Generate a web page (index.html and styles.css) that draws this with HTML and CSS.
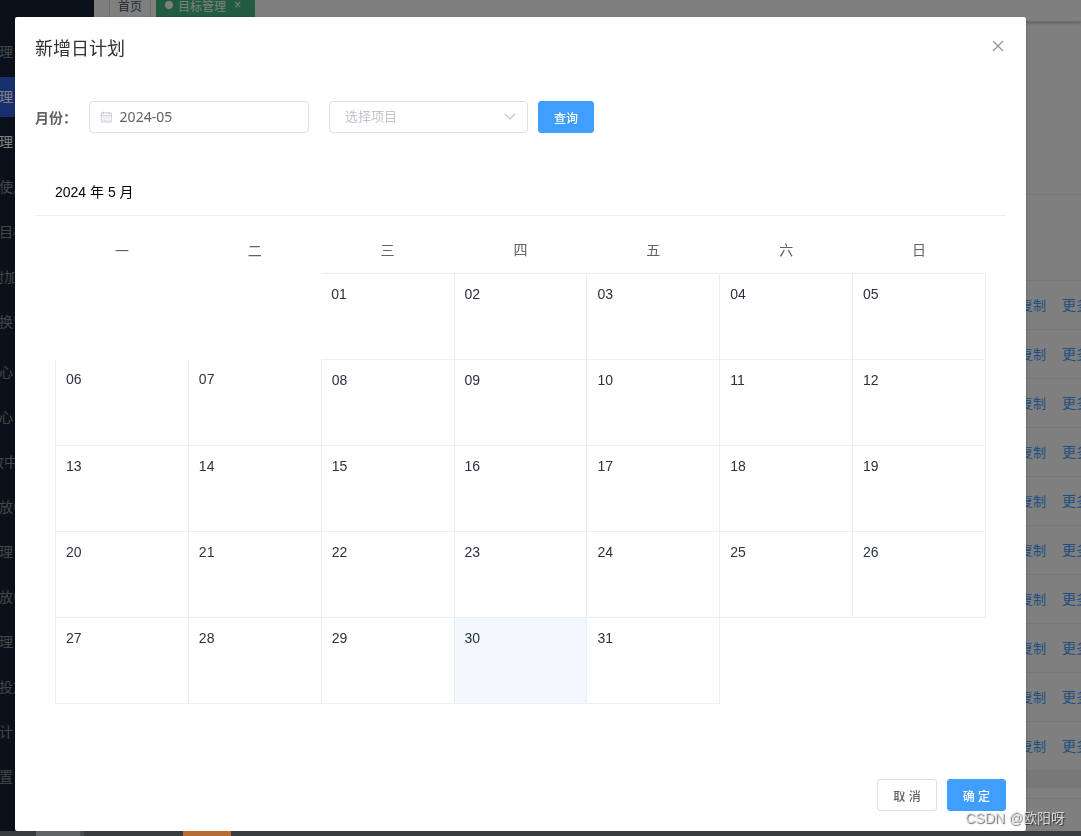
FILE: index.html
```
<!DOCTYPE html>
<html lang="zh-CN">
<head>
    <meta charset="UTF-8">
    <title>新增日计划</title>
    <link rel="stylesheet" href="styles.css">
</head>
<body>

<div class="app">
    <nav class="sidebar">
        <a href="#">理</a>
        <a href="#" class="active">理</a>
        <a href="#" class="open">理</a>
        <a href="#">使用</a>
        <a href="#">目标</a>
        <a href="#" class="deep">附加</a>
        <a href="#">换管</a>
        <a href="#" class="group">心</a>
        <a href="#">心</a>
        <a href="#" class="deep">放中</a>
        <a href="#">放中</a>
        <a href="#">理</a>
        <a href="#">放中</a>
        <a href="#">理</a>
        <a href="#">投放</a>
        <a href="#">计</a>
        <a href="#">置</a>
    </nav>

    <main class="main">
        <div class="tabs">
            <a href="#" class="tab">首页</a>
            <a href="#" class="tab current"><span class="dot"></span>目标管理<span class="tab-close">×</span></a>
        </div>
        <div class="panel search-panel"></div>
        <div class="panel head-panel"></div>
        <div class="rows">
            <div class="row"><a href="#">复制</a><a href="#" class="more">更多</a></div>
            <div class="row"><a href="#">复制</a><a href="#" class="more">更多</a></div>
            <div class="row"><a href="#">复制</a><a href="#" class="more">更多</a></div>
            <div class="row"><a href="#">复制</a><a href="#" class="more">更多</a></div>
            <div class="row"><a href="#">复制</a><a href="#" class="more">更多</a></div>
            <div class="row"><a href="#">复制</a><a href="#" class="more">更多</a></div>
            <div class="row"><a href="#">复制</a><a href="#" class="more">更多</a></div>
            <div class="row"><a href="#">复制</a><a href="#" class="more">更多</a></div>
            <div class="row"><a href="#">复制</a><a href="#" class="more">更多</a></div>
            <div class="row"><a href="#">复制</a><a href="#" class="more">更多</a></div>
        </div>
        <div class="pager"></div>
    </main>
</div>

<div class="overlay">
    <div class="dialog" role="dialog" aria-labelledby="dialogTitle">
        <div class="dialog-header">
            <h2 id="dialogTitle">新增日计划</h2>
            <button class="close" aria-label="关闭">
                <svg width="12" height="12" viewBox="0 0 12 12"><path d="M1 1l10 10M11 1L1 11" fill="none" stroke="#909399" stroke-width="1.2"/></svg>
            </button>
        </div>

        <form class="filter">
            <label for="month">月份：</label>
            <div class="field month">
                <svg width="14" height="14" viewBox="0 0 14 14" fill="none" stroke="#c0c4cc">
                    <path d="M1.5 2.5h11v10h-11zM1.5 5.5h11M4 1v3M10 1v3"/>
                    <path d="M3.5 8h7M3.5 10.5h7" stroke-dasharray="2 .7"/>
                </svg>
                <input type="text" id="month" value="2024-05">
            </div>
            <div class="field project">
                <select aria-label="选择项目">
                    <option>选择项目</option>
                </select>
                <svg width="12" height="8" viewBox="0 0 12 8"><path d="M1 1l5 5 5-5" fill="none" stroke="#c0c4cc" stroke-width="1.2"/></svg>
            </div>
            <button type="button" class="btn primary">查询</button>
        </form>

        <div class="calendar">
            <div class="calendar-title">2024 年 5 月</div>
            <div class="calendar-body">
                <table>
                    <thead>
                        <tr><th>一</th><th>二</th><th>三</th><th>四</th><th>五</th><th>六</th><th>日</th></tr>
                    </thead>
                    <tbody>
                        <tr><td class="empty"></td><td class="empty"></td><td>01</td><td>02</td><td>03</td><td>04</td><td>05</td></tr>
                        <tr><td>06</td><td>07</td><td>08</td><td>09</td><td>10</td><td>11</td><td>12</td></tr>
                        <tr><td>13</td><td>14</td><td>15</td><td>16</td><td>17</td><td>18</td><td>19</td></tr>
                        <tr><td>20</td><td>21</td><td>22</td><td>23</td><td>24</td><td>25</td><td>26</td></tr>
                        <tr><td>27</td><td>28</td><td>29</td><td class="selected">30</td><td>31</td><td class="empty"></td><td class="empty"></td></tr>
                    </tbody>
                </table>
            </div>
        </div>

        <div class="dialog-footer">
            <button class="btn">取 消</button>
            <button class="btn primary">确 定</button>
        </div>
    </div>
    <div class="taskbar">
        <span class="task"></span>
        <span class="task-edge"></span>
        <span class="task-alert"></span>
    </div>
</div>

<div class="watermark">CSDN @欧阳呀</div>

</body>
</html>
```
FILE: styles.css
```
* {
    box-sizing: border-box;
}
body {
    margin: 0;
    height: 100vh;
    overflow: hidden;
    font-family: "Liberation Sans", "Noto Sans CJK SC", sans-serif;
    font-size: 14px;
    color: #606266;
}
a {
    text-decoration: none;
}
button, input, select {
    font-family: inherit;
}

/* page behind the dialog */
.app {
    display: flex;
    height: 100vh;
}
.sidebar {
    flex: 0 0 94px;
    padding-top: 32px;
    background: #142235;
    overflow: hidden;
}
.sidebar a {
    display: block;
    height: 40px;
    margin-bottom: 5px;
    line-height: 41px;
    text-indent: -1px;
    color: #8a8d92;
}
.sidebar a.active {
    background: #3260e0;
    color: #fff;
}
.sidebar a.open {
    color: #fff;
}
.sidebar a.deep {
    text-indent: -10px;
}
.sidebar a.group {
    margin-top: 10px;
}
.main {
    flex: 1;
    min-width: 0;
    background: #fff;
    overflow: hidden;
}
.tabs {
    display: flex;
    gap: 5px;
    height: 22px;
    padding-left: 15px;
    border-bottom: 1px solid #d8dce5;
    box-shadow: 0 1px 3px #bbb;
}
.tab {
    display: flex;
    align-items: center;
    height: 18px;
    padding: 0 8px 8px;
    border: 1px solid #d8dce5;
    border-width: 0 1px;
    font-size: 12px;
    color: #495060;
}
.tab.current {
    background: #42b983;
    border-color: #42b983;
    color: #fff;
}
.dot {
    width: 8px;
    height: 8px;
    margin-right: 5px;
    border-radius: 50%;
    background: #fff;
}
.tab-close {
    margin: 0 5px 0 8px;
}
.panel {
    border-bottom: 1px solid #ebeef5;
}
.search-panel {
    height: 173px;
}
.head-panel {
    height: 86px;
}
.row {
    display: flex;
    justify-content: flex-end;
    align-items: center;
    gap: 16px;
    height: 49px;
    margin-right: -9px;
    padding-bottom: 2px;
    border-bottom: 1px solid #ebeef5;
}
.row a {
    font-size: 13px;
    color: #409eff;
}
.row a.more {
    font-size: 14px;
}
.pager {
    height: 28px;
    border-top: 17px solid #f0f0f0;
    border-bottom: 1px solid #ebeef5;
}

/* dialog */
.overlay {
    position: fixed;
    inset: 0;
    display: flex;
    flex-direction: column;
    background: rgba(0, 0, 0, 0.5);
}
.dialog {
    flex: 1;
    display: flex;
    flex-direction: column;
    margin: 17px 55px 0 15px;
    padding: 20px;
    border-radius: 2px;
    background: #fff;
    box-shadow: 0 1px 3px rgba(0, 0, 0, 0.3);
}
.dialog-header {
    display: flex;
    justify-content: space-between;
    align-items: flex-start;
}
.dialog-header h2 {
    margin: 0;
    line-height: 24px;
    font-size: 18px;
    font-weight: 400;
    color: #303133;
}
.close {
    padding: 3px 2px;
    border: 0;
    background: none;
    cursor: pointer;
}
.close svg {
    display: block;
}
.filter {
    display: flex;
    align-items: center;
    margin-top: 40px;
}
.filter label {
    width: 54px;
    font-weight: 700;
}
.field {
    display: flex;
    align-items: center;
    height: 32px;
    border: 1px solid #dcdfe6;
    border-radius: 4px;
}
.month {
    width: 220px;
    margin-right: 20px;
    padding: 0 10px;
    gap: 7px;
}
.month input {
    width: 100%;
    padding: 0 0 2px;
    border: 0;
    outline: 0;
    font-family: "Noto Sans", sans-serif;
    font-size: 14px;
    color: #606266;
}
.project {
    width: 199px;
    margin-right: 10px;
    padding: 0 11px 0 15px;
}
.project select {
    flex: 1;
    padding: 0 0 2px;
    border: 0;
    outline: 0;
    appearance: none;
    background: none;
    font-size: 13px;
    color: #c0c4cc;
}
.btn {
    height: 32px;
    padding: 0 15px;
    border: 1px solid #dcdfe6;
    border-radius: 3px;
    background: #fff;
    font-size: 12px;
    font-weight: 500;
    color: #606266;
    cursor: pointer;
}
.btn.primary {
    border-color: #409eff;
    background: #409eff;
    color: #fff;
}

/* calendar */
.calendar {
    margin-top: 35px;
}
.calendar-title {
    padding: 13px 20px 11px;
    border-bottom: 1px solid #ebeef5;
    line-height: 23px;
    color: #000;
}
.calendar-body {
    padding: 12px 20px 35px;
}
table {
    width: 100%;
    table-layout: fixed;
    border-collapse: collapse;
}
th {
    height: 45px;
    padding: 0 0 2px;
    font-weight: 400;
}
td {
    height: 86px;
    padding: 10px;
    border-right: 1px solid #ebeef5;
    border-bottom: 1px solid #ebeef5;
    line-height: 21px;
    vertical-align: top;
    color: #2c3040;
}
tbody tr:first-child td {
    border-top: 1px solid #ebeef5;
}
td:first-child {
    border-left: 1px solid #ebeef5;
}
tbody tr td.empty {
    border: 0;
}
.selected {
    background: #f2f8fe;
}
.dialog-footer {
    display: flex;
    justify-content: flex-end;
    gap: 10px;
    margin-top: auto;
}

/* desktop strip under the page */
.taskbar {
    display: flex;
    height: 5px;
    padding-left: 36px;
    background: #3a3b3c;
}
.task {
    width: 44px;
    background: #626364;
}
.task-edge {
    width: 4px;
    background: #4b4c4d;
}
.task-alert {
    width: 48px;
    margin-left: 99px;
    background: #b76e35;
}
.watermark {
    position: fixed;
    right: 16px;
    bottom: 6px;
    font-size: 14px;
    line-height: 24px;
    color: rgba(225, 225, 225, 0.9);
    text-shadow: 1px 1px 1px rgba(0, 0, 0, 0.6);
}
```
